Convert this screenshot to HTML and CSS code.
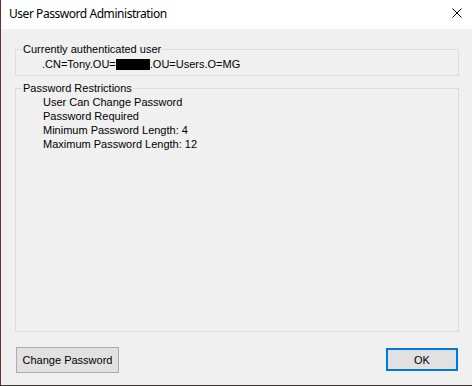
FILE: index.html
```html
<!DOCTYPE html>
<html lang="en">
<head>
    <meta charset="UTF-8">
    <title>User Password Administration</title>
    <link rel="stylesheet" href="styles.css">
</head>
<body>
    <div class="window">
        <div class="titlebar">
            <span class="title">User Password Administration</span>
            <svg class="close" width="10" height="10" viewBox="0 0 10 10">
                <path d="M0.5 0.5 L9.5 9.5 M9.5 0.5 L0.5 9.5" stroke="#000" stroke-width="1" fill="none"/>
            </svg>
        </div>

        <div class="content">
            <fieldset class="group">
                <legend>Currently authenticated user</legend>
                <div class="user-line">.CN=Tony.OU=<span class="redacted"></span>.OU=Users.O=MG</div>
            </fieldset>

            <fieldset class="group group-grow">
                <legend>Password Restrictions</legend>
                <ul class="restrictions">
                    <li>User Can Change Password</li>
                    <li>Password Required</li>
                    <li>Minimum Password Length: 4</li>
                    <li>Maximum Password Length: 12</li>
                </ul>
            </fieldset>

            <div class="buttons">
                <button class="btn btn-change">Change Password</button>
                <button class="btn btn-ok">OK</button>
            </div>
        </div>
    </div>
</body>
</html>
```

FILE: styles.css
```css
body {
    margin: 0;
    background: #3c3934;
    font-family: 'Liberation Sans', Arial, sans-serif;
    font-size: 11px;
    color: #000;
}

.window {
    width: 471px;
    height: 385px;
    border-left: 1px solid #6b2e36;
    display: flex;
    flex-direction: column;
    background: #f0f0f0;
}

.titlebar {
    height: 29px;
    background: #fff;
    display: flex;
    align-items: center;
    justify-content: space-between;
    padding: 0 10px 0 8px;
}

.title {
    font-family: 'Noto Sans', 'Open Sans', sans-serif;
    font-size: 12px;
    letter-spacing: -0.45px;
    margin-top: -2px;
}

.close {
    display: block;
    margin-top: -3px;
}

.content {
    flex: 1;
    display: flex;
    flex-direction: column;
    padding: 13px 13px 12px 14px;
}

.group {
    margin: 0;
    padding: 0 0 4px 0;
    border: 1px solid #dcdcdc;
    line-height: 14px;
}

.group legend {
    margin-left: 6px;
    padding: 0 1px;
}

.group-grow {
    flex: 1;
    margin-top: 5px;
}

.user-line {
    padding: 1px 0 0 26px;
    white-space: nowrap;
}

.redacted {
    display: inline-block;
    width: 34px;
    height: 11px;
    background: #000;
    vertical-align: -2px;
}

.restrictions {
    list-style: none;
    margin: 0;
    padding: 0 0 0 27px;
}

.buttons {
    display: flex;
    justify-content: space-between;
    align-items: flex-start;
    margin-top: 15px;
}

.btn {
    font-family: 'Liberation Sans', Arial, sans-serif;
    font-size: 11px;
    color: #000;
    background: #e1e1e1;
    border: 1px solid #adadad;
    padding: 0;
}

.btn-change {
    width: 103px;
    height: 26px;
    margin-left: 1px;
}

.btn-ok {
    width: 72px;
    height: 23px;
    margin-top: 1px;
    margin-right: 1px;
    border: 2px solid #0078d7;
}
```
